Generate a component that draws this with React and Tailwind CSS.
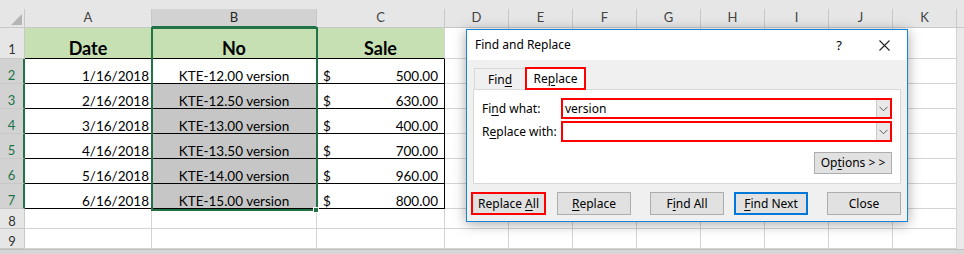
import React from "react";

const otherCols = ["D", "E", "F", "G", "H", "I", "J", "K"];

const data = [
  { n: 2, date: "1/16/2018", no: "KTE-12.00 version", amt: "500.00", bBg: "bg-white" },
  { n: 3, date: "2/16/2018", no: "KTE-12.50 version", amt: "630.00", bBg: "bg-[#c6c6c6]" },
  { n: 4, date: "3/16/2018", no: "KTE-13.00 version", amt: "400.00", bBg: "bg-[#c6c6c6]" },
  { n: 5, date: "4/16/2018", no: "KTE-13.50 version", amt: "700.00", bBg: "bg-[#c6c6c6]" },
  { n: 6, date: "5/16/2018", no: "KTE-14.00 version", amt: "960.00", bBg: "bg-[#c6c6c6]" },
  { n: 7, date: "6/16/2018", no: "KTE-15.00 version", amt: "800.00", bBg: "bg-[#c6c6c6]" },
];

function OtherCells({ h }) {
  return (
    <>
      {otherCols.map((c) => (
        <div key={c} className={`w-[64px] ${h} shrink-0 border-r border-b border-[#d4d4d4] bg-white`} />
      ))}
      <div className={`w-[7px] ${h} shrink-0 bg-[#e9e9e9]`} />
    </>
  );
}

function U({ children }) {
  return <span className="underline underline-offset-[2px]">{children}</span>;
}

function Btn({ children, extra }) {
  return (
    <div
      className={`h-[23px] w-[74px] shrink-0 flex items-center justify-center bg-[#e1e1e1] text-[12px] text-black ${extra}`}
    >
      {children}
    </div>
  );
}

function Chevron() {
  return (
    <svg width="9" height="6" viewBox="0 0 9 6">
      <path d="M0.5 0.8 L4.5 4.8 L8.5 0.8" fill="none" stroke="#5a5a5a" strokeWidth="1" />
    </svg>
  );
}

function Dialog() {
  return (
    <div className="absolute left-[466px] top-[29px] w-[442px] h-[193px] border border-[#1883d7] bg-[#f0f0f0] shadow-[0_2px_12px_rgba(0,0,0,0.35)] flex flex-col font-['Noto_Sans',sans-serif] text-black">
      {/* title bar */}
      <div className="h-[30px] bg-white flex items-center pl-[8px] shrink-0">
        <span className="text-[12px] leading-none">Find and Replace</span>
        <span className="ml-auto text-[13px] leading-none mr-[37px]">?</span>
        <svg width="11" height="11" viewBox="0 0 11 11" className="mr-[17px]">
          <path d="M0.5 0.5 L10.5 10.5 M10.5 0.5 L0.5 10.5" stroke="#222" strokeWidth="1.1" fill="none" />
        </svg>
      </div>
      {/* body */}
      <div className="flex flex-col px-[6px] pt-[7px]">
        {/* tabs */}
        <div className="flex items-end h-[22px] pl-[1px] relative z-10">
          <div className="w-[51px] h-[21px] border-t border-l border-[#d9d9d9] bg-[#f0f0f0] flex items-center justify-center text-[12px] pt-[1px]">
            <span>
              Fin<U>d</U>
            </span>
          </div>
          <div className="w-[61px] h-[23px] -mb-[1px] border-2 border-[#ff0000] bg-white flex items-center justify-center text-[12px]">
            <span>
              Re<U>p</U>lace
            </span>
          </div>
        </div>
        {/* panel */}
        <div className="w-[428px] h-[95px] border border-[#d9d9d9] bg-white flex flex-col pt-[8px] pl-[8px] pr-[8px]">
          <div className="flex items-center h-[21px]">
            <span className="w-[79px] text-[12px]">
              Fi<U>n</U>d what:
            </span>
            <div className="w-[331px] h-[21px] border-2 border-[#ff0000] flex items-stretch">
              <span className="flex-1 text-[12px] pl-[2px] leading-[17px]">version</span>
              <div className="w-[14px] bg-[#e9e9e9] border-l border-[#c9c9c9] flex items-center justify-center">
                <Chevron />
              </div>
            </div>
          </div>
          <div className="flex items-center h-[21px] mt-[2px]">
            <span className="w-[79px] text-[12px]">
              R<U>e</U>place with:
            </span>
            <div className="w-[331px] h-[21px] border-2 border-[#ff0000] flex items-stretch">
              <span className="flex-1" />
              <div className="w-[14px] bg-[#e9e9e9] border-l border-[#c9c9c9] flex items-center justify-center">
                <Chevron />
              </div>
            </div>
          </div>
          <div className="flex justify-end mt-[10px]">
            <div className="w-[78px] h-[22px] bg-[#e1e1e1] border border-[#adadad] flex items-center justify-center text-[12px]">
              <span>
                Op<U>t</U>ions &gt; &gt;
              </span>
            </div>
          </div>
        </div>
        {/* buttons */}
        <div className="flex items-center mt-[8px] -ml-[2px]">
          <Btn extra="w-[75px] border-2 border-[#ff0000]">
            <span>
              Replace <U>A</U>ll
            </span>
          </Btn>
          <Btn extra="ml-[11px] border border-[#adadad]">
            <span>
              <U>R</U>eplace
            </span>
          </Btn>
          <Btn extra="ml-[19px] border border-[#adadad]">
            <span>
              F<U>i</U>nd All
            </span>
          </Btn>
          <Btn extra="ml-[10px] border-2 border-[#0078d7]">
            <span>
              <U>F</U>ind Next
            </span>
          </Btn>
          <Btn extra="ml-[19px] border border-[#adadad]">
            <span>Close</span>
          </Btn>
        </div>
      </div>
    </div>
  );
}

export default function App() {
  return (
    <div className="w-[964px] h-[254px] relative overflow-hidden bg-[#e6e6e6] font-['Lato',sans-serif] text-black">
      <div className="h-[9px] bg-[#e6e6e6]" />
      {/* column headers */}
      <div className="flex h-[19px]">
        <div className="w-[25px] h-[19px] shrink-0 border-r border-b border-[#c8c8c8] bg-[#e6e6e6] flex items-end justify-end p-[2px]">
          <svg width="11" height="11" viewBox="0 0 11 11">
            <path d="M11 0 L11 11 L0 11 Z" fill="#b5b5b5" />
          </svg>
        </div>
        <div className="w-[127px] h-[19px] shrink-0 border-r border-b border-[#c8c8c8] bg-[#e6e6e6] flex items-center justify-center text-[13px] text-[#444]">
          A
        </div>
        <div className="w-[165px] h-[19px] shrink-0 border-r border-[#c8c8c8] border-b-2 border-b-[#217346] bg-[#d2d2d2] flex items-center justify-center text-[13px] text-[#262626]">
          B
        </div>
        <div className="w-[128px] h-[19px] shrink-0 border-r border-b border-[#c8c8c8] bg-[#e6e6e6] flex items-center justify-center text-[13px] text-[#444]">
          C
        </div>
        {otherCols.map((c) => (
          <div
            key={c}
            className="w-[64px] h-[19px] shrink-0 border-r border-b border-[#c8c8c8] bg-[#e6e6e6] flex items-center justify-center text-[13px] text-[#444]"
          >
            {c}
          </div>
        ))}
        <div className="w-[7px] h-[19px] shrink-0 border-b border-[#c8c8c8] bg-[#e6e6e6]" />
      </div>

      {/* row 1 */}
      <div className="flex h-[31px]">
        <div className="w-[25px] h-[31px] shrink-0 border-r border-b border-[#c8c8c8] bg-[#e6e6e6] flex items-end justify-center pb-[2px] text-[13px] leading-none text-[#333]">
          1
        </div>
        <div className="w-[127px] h-[31px] shrink-0 border-r border-b border-r-[#d4d4d4] border-b-black bg-[#c6e0b4] flex items-end justify-center pb-[1px] text-[18px] leading-none font-bold">
          Date
        </div>
        <div className="w-[165px] h-[31px] shrink-0 border-r border-b border-r-[#d4d4d4] border-b-black bg-[#c6e0b4] flex items-end justify-center pb-[1px] text-[18px] leading-none font-bold">
          No
        </div>
        <div className="w-[128px] h-[31px] shrink-0 border-r border-b border-r-[#d4d4d4] border-b-black bg-[#c6e0b4] flex items-end justify-center pb-[1px] text-[18px] leading-none font-bold">
          Sale
        </div>
        <OtherCells h="h-[31px]" />
      </div>

      {/* rows 2-7 */}
      {data.map((r) => (
        <div key={r.n} className="flex h-[25px]">
          <div className="w-[25px] h-[25px] shrink-0 border-r-2 border-r-[#217346] border-b border-b-[#c8c8c8] bg-[#d2d2d2] flex items-end justify-center pb-[1px] text-[13px] leading-none text-[#217346]">
            {r.n}
          </div>
          <div className="w-[127px] h-[25px] shrink-0 border-r border-b border-black bg-white flex items-end justify-end pr-[2px] text-[13.5px] leading-none">
            {r.date}
          </div>
          <div className={`w-[165px] h-[25px] shrink-0 border-r border-b border-black ${r.bBg} flex items-end justify-center text-[13.5px] leading-none`}>
            {r.no}
          </div>
          <div className="w-[128px] h-[25px] shrink-0 border-r border-b border-black bg-white flex items-end justify-between pl-[6px] pr-[6px] text-[13.5px] leading-none">
            <span>$</span>
            <span>{r.amt}</span>
          </div>
          <OtherCells h="h-[25px]" />
        </div>
      ))}

      {/* rows 8-9 */}
      {[8, 9].map((n) => (
        <div key={n} className="flex h-[20px]">
          <div className="w-[25px] h-[20px] shrink-0 border-r border-b border-[#c8c8c8] bg-[#e6e6e6] flex items-end justify-center text-[13px] leading-none text-[#333]">
            {n}
          </div>
          <div className="w-[127px] h-[20px] shrink-0 border-r border-b border-[#d4d4d4] bg-white" />
          <div className="w-[165px] h-[20px] shrink-0 border-r border-b border-[#d4d4d4] bg-white" />
          <div className="w-[128px] h-[20px] shrink-0 border-r border-b border-[#d4d4d4] bg-white" />
          <OtherCells h="h-[20px]" />
        </div>
      ))}
      <div className="h-[5px] bg-[#d6d6d6] border-t border-[#c0c0c0]" />

      {/* selection box */}
      <div className="absolute left-[151px] top-[27px] w-[167px] h-[184px] border-2 border-[#217346] pointer-events-none" />
      <div className="absolute left-[313px] top-[207px] w-[6px] h-[6px] bg-[#217346] border border-white" />

      <Dialog />
    </div>
  );
}
